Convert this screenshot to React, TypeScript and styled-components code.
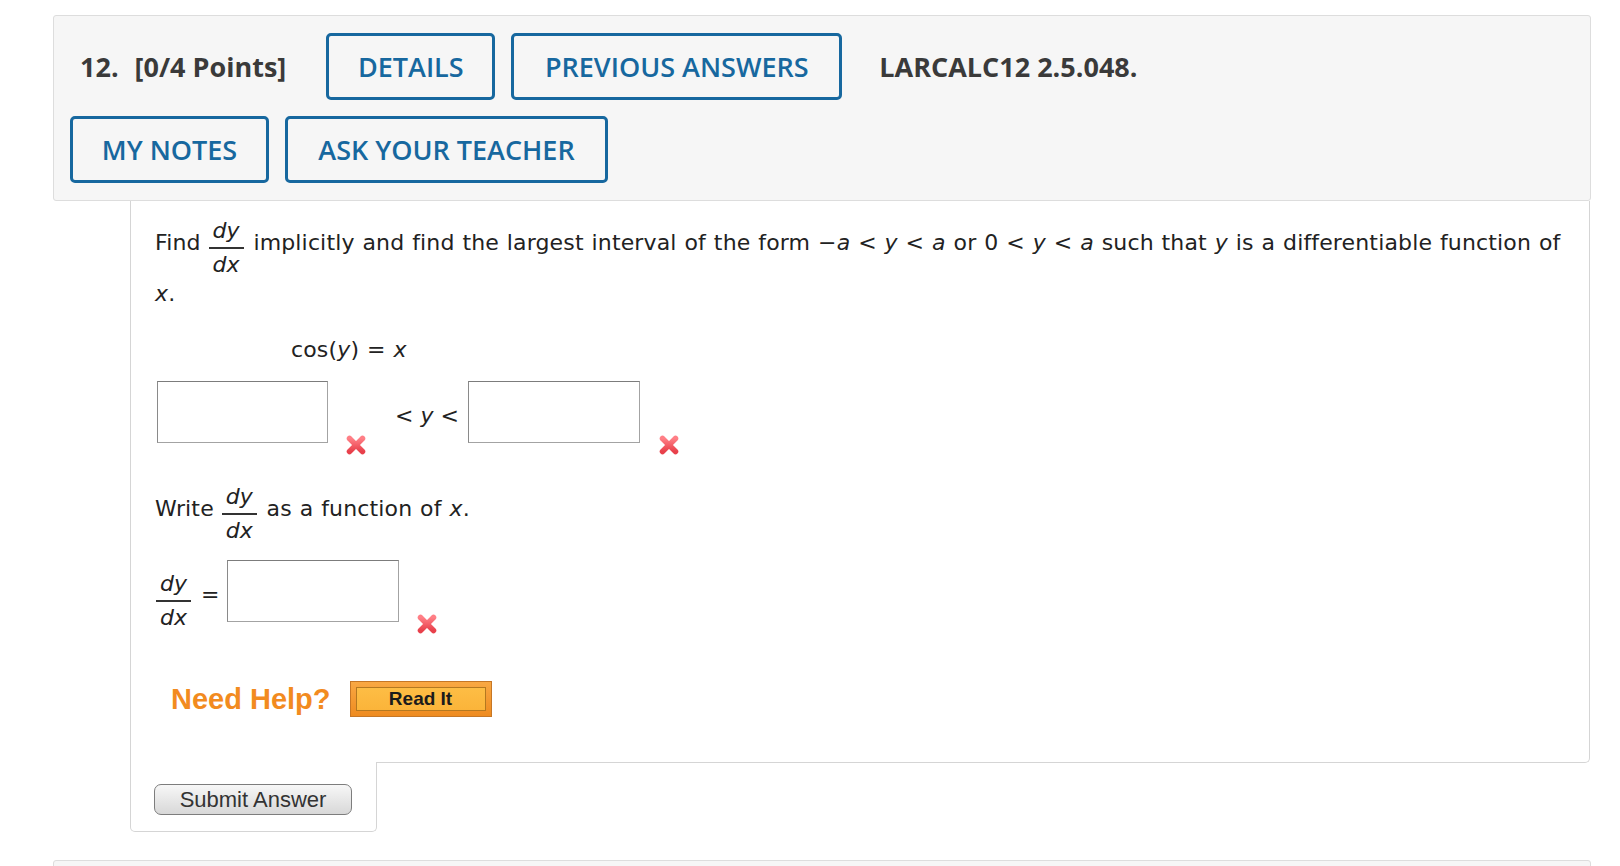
import React from 'react';
import styled, { createGlobalStyle } from 'styled-components';

const GlobalStyle = createGlobalStyle`
  html, body { margin: 0; padding: 0; background: #ffffff; }
  body { font-family: "DejaVu Sans", Verdana, sans-serif; color: #222222; }
  * { box-sizing: border-box; }
`;

const Page = styled.div`
  width: 1591px;
  padding: 15px 0 0 53px;
`;

const Header = styled.header`
  display: flex;
  flex-direction: column;
  gap: 16px;
  padding: 17px 16px;
  background: #f6f6f6;
  border: 1px solid #dddddd;
  border-radius: 3px;
  font-family: "Open Sans", sans-serif;
`;

const HeaderRow = styled.div`
  display: flex;
  align-items: center;
  gap: 16px;
`;

const HeaderText = styled.span<{ $ml?: number; $mr?: number }>`
  font-size: 27px;
  font-weight: 700;
  color: #3a3a3a;
  white-space: nowrap;
  margin-left: ${(p) => p.$ml ?? 0}px;
  margin-right: ${(p) => p.$mr ?? 0}px;
`;

const OutlineButton = styled.button<{ $w: number }>`
  width: ${(p) => p.$w}px;
  height: 67px;
  padding: 0;
  border: 3px solid #17689f;
  border-radius: 5px;
  background: transparent;
  color: #17689f;
  font-family: "Open Sans", sans-serif;
  font-weight: 600;
  font-size: 27px;
  line-height: 1;
  white-space: nowrap;
  cursor: pointer;
`;

const QuestionBody = styled.section`
  margin: 0 1px 0 77px;
  padding: 18px 24px 45px 24px;
  border: 1px solid #d5d5d5;
  border-top: none;
  border-radius: 0 0 5px 0;
  font-size: 22px;
  line-height: 34px;
`;

const Prompt = styled.p<{ $top?: number }>`
  margin: ${(p) => p.$top ?? 0}px 0 0 0;
  letter-spacing: 0.15px;
  word-spacing: 0.72px;
`;

const MathLine = styled.div`
  margin: 22px 0 0 136px;
  letter-spacing: 0.15px;
  word-spacing: 0.72px;
`;

const V = styled.i`
  font-style: italic;
`;

const FracBox = styled.span<{ $top?: number; $ml?: number }>`
  display: inline-flex;
  flex-direction: column;
  align-items: stretch;
  vertical-align: 12px;
  line-height: 24px;
  text-align: center;
  letter-spacing: 0;
  margin: ${(p) => p.$top ?? 0}px 2px 0 ${(p) => p.$ml ?? 0}px;
`;

const FracNum = styled.span`
  font-style: italic;
  padding: 0 4px 3.5px;
`;

const FracBar = styled.span`
  height: 2px;
  background: #333333;
`;

const FracDen = styled.span`
  font-style: italic;
  padding: 4.5px 4px 0;
`;

const AnswerRow = styled.div<{ $top: number }>`
  display: flex;
  align-items: flex-start;
  margin-top: ${(p) => p.$top}px;
`;

const Field = styled.input<{ $left: number; $w: number }>`
  flex: none;
  width: ${(p) => p.$w}px;
  height: 62px;
  margin: 0 0 0 ${(p) => p.$left}px;
  padding: 0 6px;
  border: 1px solid #a3a3a3;
  border-top-color: #7c7c7c;
  border-left-color: #8a8a8a;
  border-radius: 0;
  background: #ffffff;
  font: 22px "DejaVu Sans", sans-serif;
  outline: none;
`;

const Relation = styled.span<{ $left: number; $top: number }>`
  flex: none;
  white-space: pre;
  margin: ${(p) => p.$top}px 0 0 ${(p) => p.$left}px;
`;

const WrongMark = styled.svg<{ $left: number; $top: number }>`
  flex: none;
  display: block;
  margin: ${(p) => p.$top}px 0 0 ${(p) => p.$left}px;
`;

const HelpRow = styled.div`
  display: flex;
  align-items: center;
  margin-top: 46px;
  padding-left: 16px;
`;

const NeedHelp = styled.span`
  font-family: "Liberation Sans", Arial, sans-serif;
  font-weight: 700;
  font-size: 29px;
  line-height: 33px;
  color: #f28b1f;
`;

const ReadItButton = styled.button`
  width: 142px;
  height: 36px;
  margin-left: 19px;
  padding: 5px;
  border: 1px solid #c67726;
  border-radius: 0;
  background: linear-gradient(#f9a843, #ee8b20);
  cursor: pointer;
`;

const ReadItFace = styled.span`
  display: flex;
  align-items: center;
  justify-content: center;
  height: 100%;
  border: 1px solid #b47820;
  background: linear-gradient(#fdbd45, #fbb43a);
  font-family: "Liberation Sans", Arial, sans-serif;
  font-weight: 700;
  font-size: 19px;
  color: #1b1b1b;
`;

const SubmitTab = styled.div`
  width: 247px;
  margin: -1px 0 0 77px;
  padding: 22px 0 16px 23px;
  border: 1px solid #d5d5d5;
  border-top: none;
  border-radius: 0 0 5px 5px;
  background: #ffffff;
`;

const SubmitButton = styled.button`
  display: block;
  width: 198px;
  height: 31px;
  padding: 0;
  border: 1px solid #7d7d7d;
  border-radius: 7px;
  background: linear-gradient(#f7f7f7, #d8d8d8);
  font-family: "Liberation Sans", Arial, sans-serif;
  font-size: 22px;
  color: #333333;
  cursor: pointer;
`;

const NextPanel = styled.div`
  height: 40px;
  margin-top: 28px;
  background: #f6f6f6;
  border: 1px solid #dddddd;
  border-radius: 3px;
`;

type FracProps = { num: React.ReactNode; den: React.ReactNode; top?: number; ml?: number };

function Frac({ num, den, top, ml }: FracProps) {
  return (
    <FracBox $top={top} $ml={ml}>
      <FracNum>{num}</FracNum>
      <FracBar />
      <FracDen>{den}</FracDen>
    </FracBox>
  );
}

function Wrong({ left, top }: { left: number; top: number }) {
  return (
    <WrongMark $left={left} $top={top} width="22" height="22" viewBox="0 0 22 22" aria-label="incorrect">
      <defs>
        <linearGradient id="wrongGrad" x1="0" y1="0" x2="0" y2="1">
          <stop offset="0" stopColor="#ff7f86" />
          <stop offset="1" stopColor="#e8404b" />
        </linearGradient>
      </defs>
      <g stroke="url(#wrongGrad)" strokeWidth="5.5" strokeLinecap="round">
        <line x1="4.5" y1="4.5" x2="17.5" y2="17.5" />
        <line x1="17.5" y1="4.5" x2="4.5" y2="17.5" />
      </g>
    </WrongMark>
  );
}

export default function App() {
  return (
    <>
      <GlobalStyle />
      <Page>
        <Header>
          <HeaderRow>
            <HeaderText $ml={10}>12.</HeaderText>
            <HeaderText $mr={24}>[0/4 Points]</HeaderText>
            <OutlineButton $w={169}>DETAILS</OutlineButton>
            <OutlineButton $w={331}>PREVIOUS ANSWERS</OutlineButton>
            <HeaderText $ml={21}>LARCALC12 2.5.048.</HeaderText>
          </HeaderRow>
          <HeaderRow>
            <OutlineButton $w={199}>MY NOTES</OutlineButton>
            <OutlineButton $w={323}>ASK YOUR TEACHER</OutlineButton>
          </HeaderRow>
        </Header>

        <QuestionBody>
          <Prompt>
            Find <Frac num="dy" den="dx" /> implicitly and find the largest interval of the form −<V>a</V> &lt; <V>y</V> &lt; <V>a</V> or 0 &lt; <V>y</V> &lt; <V>a</V> such that <V>y</V> is a differentiable function of <V>x</V>.
          </Prompt>
          <MathLine>
            cos(<V>y</V>) = <V>x</V>
          </MathLine>
          <AnswerRow $top={14}>
            <Field $left={2} $w={171} type="text" aria-label="lower bound" />
            <Wrong left={17} top={53} />
            <Relation $left={28} $top={18}>
              &lt; <V>y</V> &lt;
            </Relation>
            <Field $left={9} $w={172} type="text" aria-label="upper bound" />
            <Wrong left={18} top={53} />
          </AnswerRow>
          <Prompt $top={29}>
            Write <Frac num="dy" den="dx" /> as a function of <V>x</V>.
          </Prompt>
          <AnswerRow $top={17}>
            <Frac num="dy" den="dx" top={12} ml={1} />
            <Relation $left={8} $top={18}>=</Relation>
            <Field $left={8} $w={172} type="text" aria-label="dy/dx" />
            <Wrong left={17} top={53} />
          </AnswerRow>
          <HelpRow>
            <NeedHelp>Need Help?</NeedHelp>
            <ReadItButton>
              <ReadItFace>Read It</ReadItFace>
            </ReadItButton>
          </HelpRow>
        </QuestionBody>
        <SubmitTab>
          <SubmitButton>Submit Answer</SubmitButton>
        </SubmitTab>
        <NextPanel />
      </Page>
    </>
  );
}
